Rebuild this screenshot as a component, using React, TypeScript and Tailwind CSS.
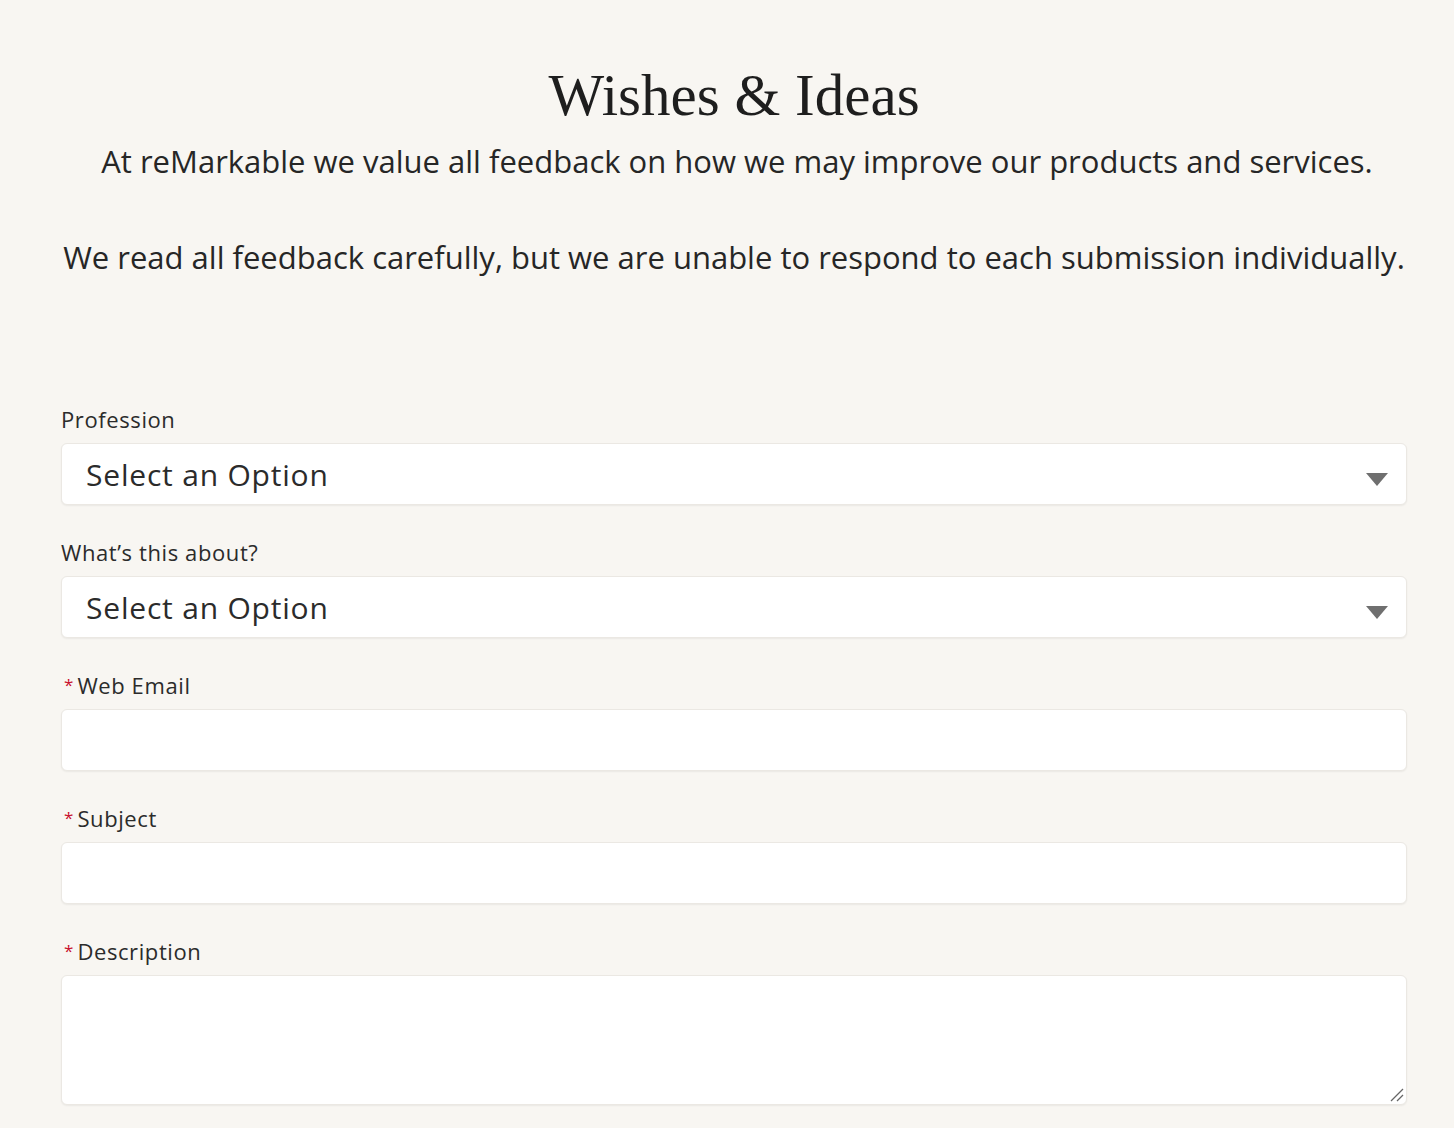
function Label({ text, required }: { text: string; required?: boolean }) {
  return (
    <label className="block text-[22px] leading-[26px] tracking-[0.6px] text-[#2b2b2b] mb-[11px]">
      {required && <span className="text-[#c8102e] text-[17px] mr-[4px] ml-[3px] align-[3px] tracking-normal">*</span>}
      {text}
    </label>
  );
}

function SelectBox() {
  return (
    <div className="h-[62px] bg-white rounded-[6px] border border-[#ebe8e3] shadow-[0_1px_2px_rgba(0,0,0,0.06)] flex items-center justify-between pl-[24px] pr-[18px]">
      <span className="text-[30px] tracking-[0.8px] text-[#2b2b2b]">Select an Option</span>
      <svg width="22" height="14" viewBox="0 0 22 14" className="mt-[12px]">
        <polygon points="0,0 22,0 11,13" fill="#6f6f6f" />
      </svg>
    </div>
  );
}

function InputBox() {
  return (
    <div className="h-[62px] bg-white rounded-[6px] border border-[#ebe8e3] shadow-[0_1px_2px_rgba(0,0,0,0.06)]" />
  );
}

export default function App() {
  return (
    <div
      className="min-h-[1128px] bg-[#f8f6f2] pl-[61px] pr-[47px] text-[#222]"
      style={{ fontFamily: '"Open Sans", Arial, sans-serif' }}
    >
      <div className="text-center">
        <h1
          className="pt-[60px] text-[59px] leading-[70px] text-[#1e1e1e]"
          style={{ fontFamily: '"Liberation Serif", "Times New Roman", serif' }}
        >
          Wishes &amp; Ideas
        </h1>
        <p className="mt-[11px] pl-[6px] text-[31px] leading-[40px] text-[#262626]">
          At reMarkable we value all feedback on how we may improve our products and services.
        </p>
        <p className="mt-[56px] text-[31px] leading-[40px] text-[#262626]">
          We read all feedback carefully, but we are unable to respond to each submission individually.
        </p>
      </div>

      <form className="mt-[129px] flex flex-col">
        <Label text="Profession" />
        <SelectBox />
        <div className="h-[34px]" />
        <Label text="What’s this about?" />
        <SelectBox />
        <div className="h-[34px]" />
        <Label text="Web Email" required />
        <InputBox />
        <div className="h-[34px]" />
        <Label text="Subject" required />
        <InputBox />
        <div className="h-[34px]" />
        <Label text="Description" required />
        <div className="relative h-[130px] bg-white rounded-[6px] border border-[#ebe8e3] shadow-[0_1px_2px_rgba(0,0,0,0.06)]">
          <svg width="14" height="14" viewBox="0 0 14 14" className="absolute right-[2px] bottom-[2px]">
            <line x1="1" y1="13" x2="13" y2="1" stroke="#666" strokeWidth="1.3" />
            <line x1="7" y1="13" x2="13" y2="7" stroke="#666" strokeWidth="1.3" />
          </svg>
        </div>
      </form>
    </div>
  );
}
